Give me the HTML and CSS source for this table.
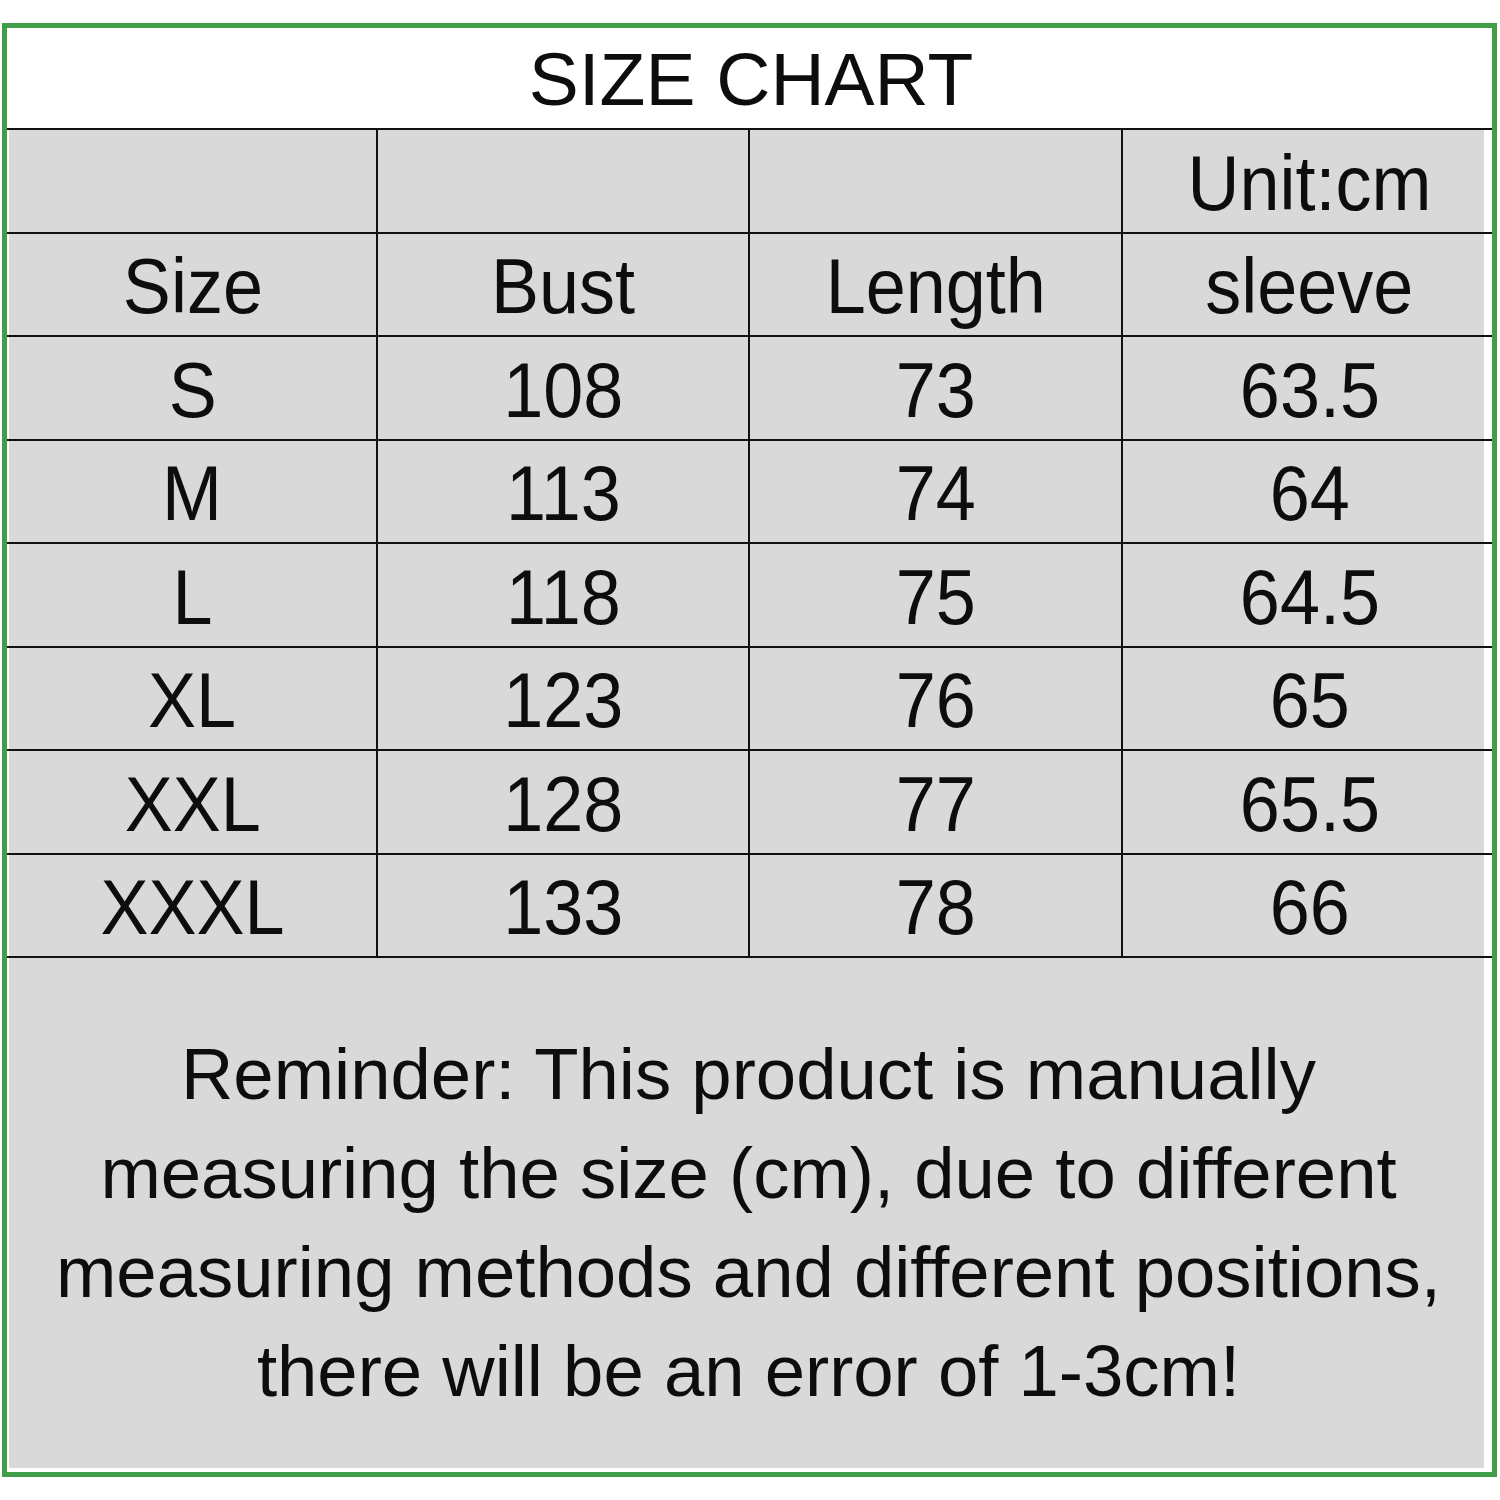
FILE: index.html
```html
<!DOCTYPE html>
<html lang="en">
<head>
<meta charset="utf-8">
<title>Size Chart</title>
<link rel="stylesheet" href="styles.css">
</head>
<body>
<div class="chart">
  <div class="title">SIZE CHART</div>
  <div class="row">
    <div class="cell"></div>
    <div class="cell"></div>
    <div class="cell"></div>
    <div class="cell last"><span class="t">Unit:cm</span></div>
  </div>
  <div class="row">
    <div class="cell"><span class="t">Size</span></div>
    <div class="cell"><span class="t">Bust</span></div>
    <div class="cell"><span class="t">Length</span></div>
    <div class="cell last"><span class="t">sleeve</span></div>
  </div>
  <div class="row">
    <div class="cell"><span class="t">S</span></div>
    <div class="cell"><span class="t">108</span></div>
    <div class="cell"><span class="t">73</span></div>
    <div class="cell last"><span class="t">63.5</span></div>
  </div>
  <div class="row">
    <div class="cell"><span class="t">M</span></div>
    <div class="cell"><span class="t">113</span></div>
    <div class="cell"><span class="t">74</span></div>
    <div class="cell last"><span class="t">64</span></div>
  </div>
  <div class="row">
    <div class="cell"><span class="t">L</span></div>
    <div class="cell"><span class="t">118</span></div>
    <div class="cell"><span class="t">75</span></div>
    <div class="cell last"><span class="t">64.5</span></div>
  </div>
  <div class="row">
    <div class="cell"><span class="t">XL</span></div>
    <div class="cell"><span class="t">123</span></div>
    <div class="cell"><span class="t">76</span></div>
    <div class="cell last"><span class="t">65</span></div>
  </div>
  <div class="row">
    <div class="cell"><span class="t">XXL</span></div>
    <div class="cell"><span class="t">128</span></div>
    <div class="cell"><span class="t">77</span></div>
    <div class="cell last"><span class="t">65.5</span></div>
  </div>
  <div class="row">
    <div class="cell"><span class="t">XXXL</span></div>
    <div class="cell"><span class="t">133</span></div>
    <div class="cell"><span class="t">78</span></div>
    <div class="cell last"><span class="t">66</span></div>
  </div>
  <div class="reminder">
    <p class="note">Reminder: This product is manually<br>measuring the size (cm), due to different<br>measuring methods and different positions,<br>there will be an error of 1-3cm!</p>
  </div>
</div>
</body>
</html>
```
FILE: styles.css
```css
html, body {
  margin: 0;
  padding: 0;
  background: #ffffff;
}

body {
  font-family: "Liberation Sans", Arial, sans-serif;
  color: #0d0d0d;
}

.chart {
  margin: 23px 0 0 2px;
  width: 1485px;
  border: 5px solid #3f9e47;
  background: #ffffff;
}

.title {
  height: 102px;
  box-sizing: border-box;
  border-bottom: 2px solid #111111;
  display: flex;
  align-items: center;
  justify-content: center;
  font-size: 75px;
  line-height: 1;
  padding-left: 3px;
  padding-top: 2px;
}

.row {
  display: grid;
  grid-template-columns: 369px 372px 373px 361px;
  padding-left: 2px;
  padding-right: 8px;
  height: 103.5px;
  box-sizing: border-box;
  border-bottom: 2px solid #111111;
  background: #ffffff;
}

.cell {
  background: #d9d9d9;
  border-right: 2px solid #111111;
  display: flex;
  align-items: center;
  justify-content: center;
  font-size: 77px;
  line-height: 1;
  padding-top: 5px;
  box-sizing: border-box;
}

.cell.last {
  border-right: none;
  padding-left: 12px;
}

.t {
  display: inline-block;
  transform: scaleX(0.935);
  white-space: nowrap;
}

.reminder {
  padding: 0 8px 4px 2px;
}

.note {
  margin: 0;
  background: #d9d9d9;
  height: 510px;
  box-sizing: border-box;
  padding-top: 66px;
  padding-left: 4px;
  text-align: center;
  font-size: 72.5px;
  line-height: 99px;
}
```
